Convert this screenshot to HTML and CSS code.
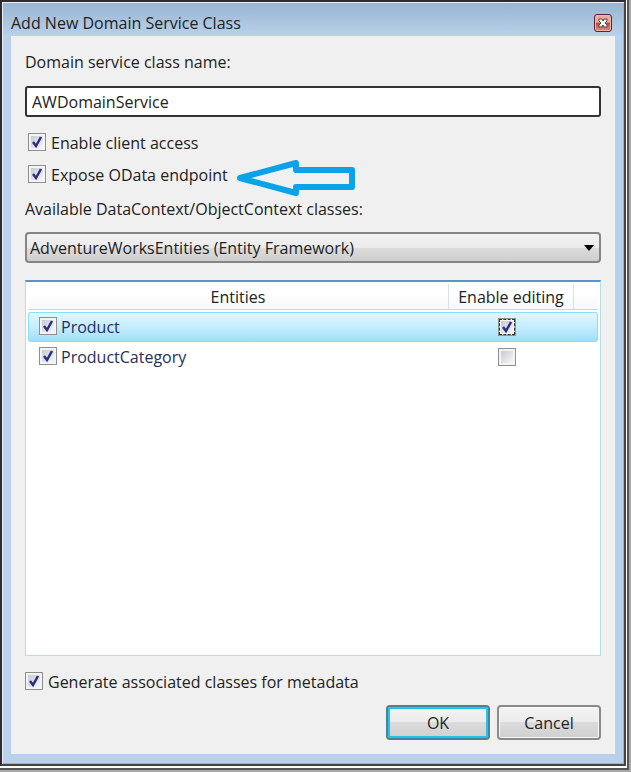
FILE: index.html
```html
<!DOCTYPE html>
<html lang="en">
<head>
  <meta charset="UTF-8">
  <meta name="viewport" content="width=device-width, initial-scale=1">
  <title>Add New Domain Service Class</title>
  <link rel="stylesheet" href="styles.css">
</head>
<body>
<div class="backdrop">
  <div class="window" role="dialog" aria-labelledby="dialogTitle">
    <div class="titlebar">
      <h1 id="dialogTitle">Add New Domain Service Class</h1>
      <button type="button" class="close" aria-label="Close">
        <svg width="18" height="18" viewBox="0 0 18 18">
          <path d="M5 5h3l1 2 1-2h3v2l-2 2 2 2v2h-3l-1-2-1 2H5v-2l2-2-2-2z" fill="#fff" stroke="#4a4655" stroke-width="1"/>
        </svg>
      </button>
    </div>

    <form class="content">
      <label class="caption" for="className">Domain service class name:</label>
      <input type="text" class="textbox" id="className" value="AWDomainService">

      <div class="check-row">
        <input type="checkbox" id="clientAccess" checked>
        <label for="clientAccess">Enable client access</label>
      </div>
      <div class="check-row">
        <input type="checkbox" id="odata" checked>
        <label for="odata">Expose OData endpoint</label>
        <svg class="arrow" width="122" height="38" viewBox="0 0 122 38">
          <path d="M4 19L60 4V11H116V28H60V34Z" fill="none" stroke="#0aa2e8" stroke-width="6" stroke-linejoin="round"/>
        </svg>
      </div>

      <label class="caption context" for="context">Available DataContext/ObjectContext classes:</label>
      <select id="context" class="combo">
        <option>AdventureWorksEntities (Entity Framework)</option>
      </select>

      <div class="list">
        <table>
          <thead>
            <tr>
              <th class="name">Entities</th>
              <th class="edit">Enable editing</th>
              <th class="rest"></th>
            </tr>
          </thead>
          <tbody>
            <tr class="selected">
              <td>
                <div class="entity">
                  <input type="checkbox" id="product" checked>
                  <label for="product">Product</label>
                </div>
              </td>
              <td class="edit"><input type="checkbox" class="focused" aria-label="Enable editing of Product" checked></td>
              <td></td>
            </tr>
            <tr>
              <td>
                <div class="entity">
                  <input type="checkbox" id="category" checked>
                  <label for="category">ProductCategory</label>
                </div>
              </td>
              <td class="edit"><input type="checkbox" aria-label="Enable editing of ProductCategory"></td>
              <td></td>
            </tr>
          </tbody>
        </table>
      </div>

      <div class="check-row metadata">
        <input type="checkbox" id="metadata" checked>
        <label for="metadata">Generate associated classes for metadata</label>
      </div>

      <div class="buttons">
        <button type="button" class="default">OK</button>
        <button type="button">Cancel</button>
      </div>
    </form>
  </div>
</div>
</body>
</html>
```
FILE: styles.css
```css
* {
  box-sizing: border-box;
}
body {
  margin: 0;
  padding: 0 2px 2px 0;
  min-height: 100vh;
  display: flex;
  background: #a8a8a8;
  font-family: "Open Sans", "Noto Sans", sans-serif;
  font-size: 16px;
  line-height: 24px;
  color: #222;
}
input, select, button {
  font: inherit;
  color: inherit;
  margin: 0;
}

/* window frame */
.backdrop {
  flex: 1;
  display: flex;
  padding: 0 1px 2px 0;
  border: solid #555;
  border-width: 0 2px 2px 0;
  background: #fff;
}
.window {
  flex: 1;
  display: flex;
  flex-direction: column;
  padding: 0 9px 10px;
  border: 2px solid #444;
  border-top-color: #2e2a2e;
  border-left-color: #2e2a2e;
  background: #b9d1ea linear-gradient(#98b4d2, #b9d1ea) no-repeat 0 0 / 100% 34px;
  box-shadow: inset 1px 1px #e6eef7, inset -1px -1px #4fd0f0;
}
.titlebar {
  display: flex;
  align-items: center;
  justify-content: space-between;
  height: 34px;
  padding: 8px 3px 0 0;
}
.titlebar h1 {
  margin: 0;
  font-size: 16px;
  font-weight: normal;
}
.close {
  width: 18px;
  height: 18px;
  padding: 0;
  border: 1px solid #5c2437;
  border-radius: 3px;
  background: linear-gradient(#e9a99b 45%, #c4452f 50%, #dd9480);
  box-shadow: inset 0 0 0 1px #eab5a8;
}
.close svg {
  display: block;
  margin: -1px;
}

.content {
  flex: 1;
  display: flex;
  flex-direction: column;
  padding: 14px;
  background: #f0f0f0;
}
.textbox {
  height: 31px;
  margin: 12px 0 10px;
  padding: 0 5px;
  border: 2px solid #333;
  border-radius: 3px;
  background: #fff;
}

/* tick boxes */
.check-row {
  position: relative;
  display: flex;
  align-items: center;
  gap: 5px;
  height: 32px;
  padding-left: 3px;
}
input[type=checkbox] {
  appearance: none;
  flex: none;
  width: 18px;
  height: 18px;
  margin-bottom: 2px;
  border: 1px solid #8e8f8f;
  background: linear-gradient(135deg, #c6cad2, #f6f6f6) content-box, #f4f4f4;
  padding: 2px;
}
input[type=checkbox]:checked {
  background: url("data:image/svg+xml,%3Csvg xmlns='http://www.w3.org/2000/svg' viewBox='0 0 16 16'%3E%3Cpath d='M4 8l3 4 5-9' fill='none' stroke='%232a2f86' stroke-width='2.500'/%3E%3C/svg%3E") center / 16px no-repeat border-box, linear-gradient(135deg, #c6cad2, #f6f6f6) content-box, #f4f4f4;
}
input[type=checkbox].focused {
  outline: 1px dashed #333;
  outline-offset: -2px;
}
.arrow {
  position: absolute;
  left: 211px;
  top: 0;
}

.context {
  margin-top: 6px;
}
.combo {
  appearance: none;
  height: 31px;
  margin: 11px 0 17px;
  padding: 0 3px;
  border: 2px solid #858585;
  border-radius: 4px;
  background: url("data:image/svg+xml,%3Csvg xmlns='http://www.w3.org/2000/svg' viewBox='0 0 10 6'%3E%3Cpath d='M0 0h10L5 6z'/%3E%3C/svg%3E") right 5px center / 10px 6px no-repeat, linear-gradient(#f2f2f2, #ebebeb 50%, #dcdcdc 50%, #cfcfcf);
}

/* entity list */
.list {
  flex: 1;
  min-height: 120px;
  padding: 2px;
  border: 1px solid #b5dcef;
  border-top: 2px solid #5b93c4;
  background: #fff;
}
.list table {
  width: 100%;
  border-collapse: separate;
  border-spacing: 0;
  table-layout: fixed;
}
.list th {
  height: 26px;
  padding: 0;
  font-weight: normal;
  border-right: 1px solid #dcdfe3;
  border-bottom: 1px solid #d5d5d5;
  background: linear-gradient(#fff 40%, #f7f8fa);
}
.list th.edit {
  width: 125px;
}
.list th.rest {
  width: 24px;
  border-right: 0;
}
.list td {
  height: 30px;
  padding: 0;
  border: 1px solid transparent;
  border-width: 1px 0;
  color: #24305e;
}
.list td:first-child {
  border-left-width: 1px;
}
.list td:last-child {
  border-right-width: 1px;
}
.list td.edit {
  padding-right: 9px;
}
.list td.edit input {
  display: block;
  margin: 0 auto;
}
/* gap between the header and the rows */
.list tbody::before {
  content: "";
  display: block;
  height: 2px;
}
.selected td {
  border-color: #8fdcf8;
  background: linear-gradient(#e2f6ff, #c4edff 50%, #a3def8);
}
.selected td:first-child {
  border-radius: 3px 0 0 3px;
}
.selected td:last-child {
  border-radius: 0 3px 3px 0;
}
.entity {
  display: flex;
  align-items: center;
  gap: 4px;
  padding-left: 10px;
}

.metadata {
  margin-top: 10px;
  padding-left: 0;
}
.buttons {
  display: flex;
  justify-content: flex-end;
  gap: 7px;
  margin-top: 7px;
}
.buttons button {
  width: 104px;
  height: 35px;
  padding: 0;
  border: 2px solid #8a8a8a;
  border-radius: 4px;
  background: linear-gradient(#f3f3f3, #ebebeb 50%, #dcdcdc 50%, #cfcfcf);
  box-shadow: inset 0 0 0 1px #f8f8f8;
}
.buttons .default {
  border-color: #4b8199;
  box-shadow: inset 0 0 0 2px #22c3ea;
}
```
